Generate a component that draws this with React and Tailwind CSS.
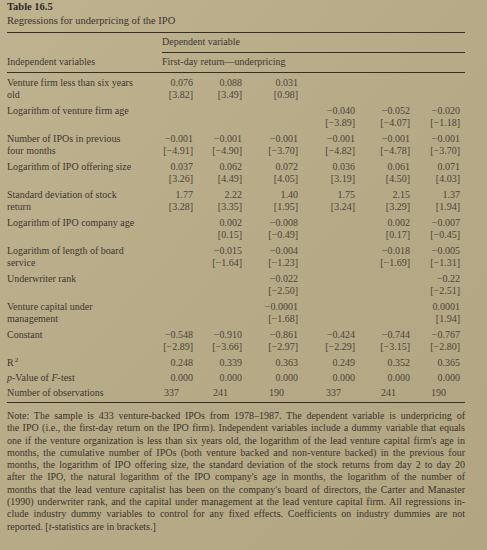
const rows = [
  {
    label: ["Venture firm less than six years", "old"],
    v: [["0.076", "[3.82]"], ["0.088", "[3.49]"], ["0.031", "[0.98]"], null, null, null],
  },
  {
    label: ["Logarithm of venture firm age"],
    v: [null, null, null, ["−0.040", "[−3.89]"], ["−0.052", "[−4.07]"], ["−0.020", "[−1.18]"]],
  },
  {
    label: ["Number of IPOs in previous", "four months"],
    v: [
      ["−0.001", "[−4.91]"],
      ["−0.001", "[−4.90]"],
      ["−0.001", "[−3.70]"],
      ["−0.001", "[−4.82]"],
      ["−0.001", "[−4.78]"],
      ["−0.001", "[−3.70]"],
    ],
  },
  {
    label: ["Logarithm of IPO offering size"],
    v: [
      ["0.037", "[3.26]"],
      ["0.062", "[4.49]"],
      ["0.072", "[4.05]"],
      ["0.036", "[3.19]"],
      ["0.061", "[4.50]"],
      ["0.071", "[4.03]"],
    ],
  },
  {
    label: ["Standard deviation of stock", "return"],
    v: [
      ["1.77", "[3.28]"],
      ["2.22", "[3.35]"],
      ["1.40", "[1.95]"],
      ["1.75", "[3.24]"],
      ["2.15", "[3.29]"],
      ["1.37", "[1.94]"],
    ],
  },
  {
    label: ["Logarithm of IPO company age"],
    v: [null, ["0.002", "[0.15]"], ["−0.008", "[−0.49]"], null, ["0.002", "[0.17]"], ["−0.007", "[−0.45]"]],
  },
  {
    label: ["Logarithm of length of board", "service"],
    v: [null, ["−0.015", "[−1.64]"], ["−0.004", "[−1.23]"], null, ["−0.018", "[−1.69]"], ["−0.005", "[−1.31]"]],
  },
  {
    label: ["Underwriter rank"],
    v: [null, null, ["−0.022", "[−2.50]"], null, null, ["−0.22", "[−2.51]"]],
  },
  {
    label: ["Venture capital under", "management"],
    v: [null, null, ["−0.0001", "[−1.68]"], null, null, ["0.0001", "[1.94]"]],
  },
  {
    label: ["Constant"],
    v: [
      ["−0.548", "[−2.89]"],
      ["−0.910", "[−3.66]"],
      ["−0.861", "[−2.97]"],
      ["−0.424", "[−2.29]"],
      ["−0.744", "[−3.15]"],
      ["−0.767", "[−2.80]"],
    ],
  },
];

const r2 = ["0.248", "0.339", "0.363", "0.249", "0.352", "0.365"];
const pval = ["0.000", "0.000", "0.000", "0.000", "0.000", "0.000"];
const obs = ["337", "241", "190", "337", "241", "190"];

const noteLines = [
  "Note: The sample is 433 venture-backed IPOs from 1978–1987. The dependent variable is underpricing of",
  "the IPO (i.e., the first-day return on the IPO firm). Independent variables include a dummy variable that equals",
  "one if the venture organization is less than six years old, the logarithm of the lead venture capital firm's age in",
  "months, the cumulative number of IPOs (both venture backed and non-venture backed) in the previous four",
  "months, the logarithm of IPO offering size, the standard deviation of the stock returns from day 2 to day 20",
  "after the IPO, the natural logarithm of the IPO company's age in months, the logarithm of the number of",
  "months that the lead venture capitalist has been on the company's board of directors, the Carter and Manaster",
  "(1990) underwriter rank, and the capital under management at the lead venture capital firm. All regressions in-",
  "clude industry dummy variables to control for any fixed effects. Coefficients on industry dummies are not",
];

const grid = "grid grid-cols-[138px_48px_49px_56px_57px_55px_50px]";

const Row = ({ row }) => {
  return (
    <div className={`${grid} py-[2px]`}>
      <div className="whitespace-nowrap">
        {row.label.map((l) => (
          <div key={l} className="h-[12px]">
            {l}
          </div>
        ))}
      </div>
      {row.v.map((c, i) => (
        <div key={i} className="flex flex-col items-end text-[#4a453a]">
          {c && (
            <>
              <div className="h-[12px] whitespace-nowrap">{c[0]}</div>
              <div className="h-[12px] whitespace-nowrap">{c[1]}</div>
            </>
          )}
        </div>
      ))}
    </div>
  );
};

const SingleRow = ({ label, values, extra = "" }) => {
  return (
    <div className={`${grid} py-[1.5px]`}>
      <div className="h-[12px] whitespace-nowrap">{label}</div>
      {values.map((v, i) => (
        <div key={i} className={`h-[12px] text-right text-[#4a453a] ${extra}`}>
          {v}
        </div>
      ))}
    </div>
  );
};

const App = () => {
  return (
    <div className="w-[487px] h-[550px] overflow-hidden bg-linear-to-br from-[#bfb28f] via-[#b7aa87] to-[#b2a582] font-['Liberation_Serif',serif] text-[10px] leading-[12px] text-[#3d382f]">
      <div className="ml-[7px] w-[458px] pt-[1px]">
        <div className="h-[12px] font-bold text-[10.5px] text-[#2e2a24]">Table 16.5</div>
        <div className="mt-[1px] h-[14px] leading-[14px] text-[10.5px] text-[#3a352d]">
          Regressions for underpricing of the IPO
        </div>
        <div className="mt-[4px] border-t border-[#35312a]" />

        <div className="flex">
          <div className="w-[155px] shrink-0" />
          <div className="flex-1 pt-[3px] pb-[4px] h-[20px] border-b border-[#35312a]">
            Dependent variable
          </div>
        </div>
        <div className="flex pt-[3px] pb-[4px] border-b border-[#35312a]">
          <div className="w-[155px] shrink-0 h-[12px]">Independent variables</div>
          <div className="h-[12px]">First-day return—underpricing</div>
        </div>

        <div className="pt-[2px]">
          {rows.map((row, i) => (
            <Row key={i} row={row} />
          ))}
          <SingleRow
            label={
              <>
                R<sup className="text-[7px] ml-[1px]">2</sup>
              </>
            }
            values={r2}
          />
          <SingleRow
            label={
              <>
                <i>p</i>-Value of <i>F</i>-test
              </>
            }
            values={pval}
          />
          <SingleRow label="Number of observations" values={obs} extra="pr-[14px]" />
        </div>

        <div className="mt-[2px] border-t border-[#35312a]" />

        <div className="pt-[7px] leading-[12.3px] text-[#3a352c]">
          {noteLines.map((l, i) => (
            <div key={i} className="text-justify [text-align-last:justify]">
              {l}
            </div>
          ))}
          <div>
            reported. [<i>t</i>-statistics are in brackets.]
          </div>
        </div>
      </div>
    </div>
  );
};

export default App;
